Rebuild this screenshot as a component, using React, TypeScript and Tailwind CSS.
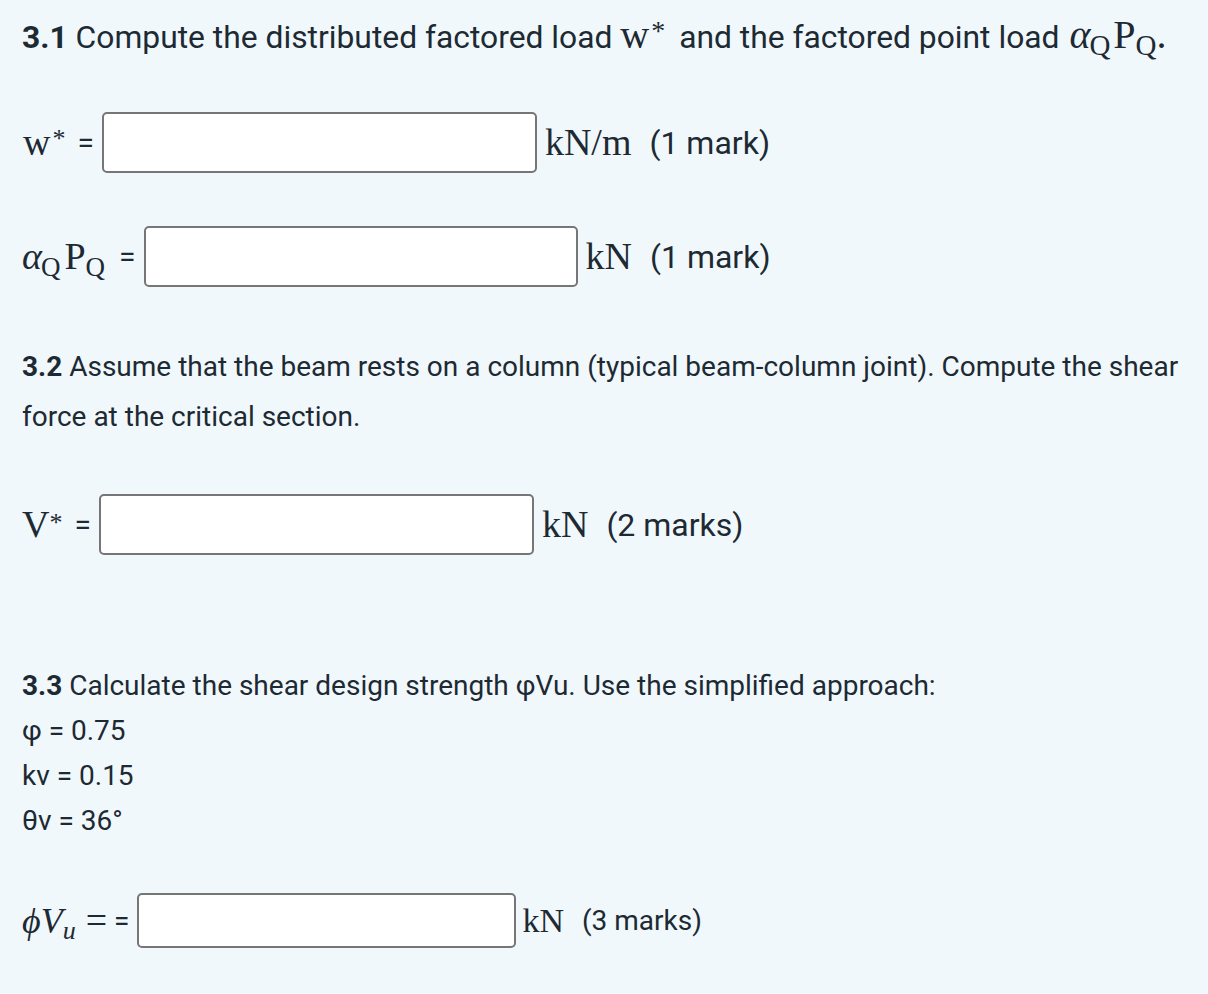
import React from "react";

const serif = "font-['Liberation_Serif',serif]";

const AnswerBox = ({ width, height = 61 }: { width: number; height?: number }) => (
  <input
    type="text"
    className="bg-white border-2 border-[#767676] rounded-[5px] outline-none"
    style={{ width, height }}
  />
);

const Unit = ({
  unit,
  marks,
  small = false,
}: {
  unit: string;
  marks: string;
  small?: boolean;
}) => (
  <div className="flex items-center">
    <span className={`${serif} ${small ? "text-[34px] ml-[6px]" : "text-[38px] ml-[8px]"}`}>{unit}</span>
    <span className={small ? "text-[28px] ml-[18px]" : "text-[32px] ml-[18px]"}>{marks}</span>
  </div>
);

export default function App() {
  return (
    <div className="min-h-screen bg-[#f1f8fc] text-[#1d2a33] font-['Roboto',sans-serif] pl-[22px] pt-[12px] pb-10">
      {/* 3.1 */}
      <p className="text-[31.8px] leading-[46px] whitespace-nowrap">
        <b className="font-bold">3.1</b> Compute the distributed factored load{" "}
        <span className={`${serif} text-[40px] mr-[6px]`}>
          w<sup className="text-[28px] relative -top-[8px] ml-[2px]">*</sup>
        </span>{" "}
        and the factored point load{" "}
        <span className={`${serif} text-[40px] ml-[2px]`}>
          <i>α</i>
          <sub className="text-[29px] -ml-[1px]">Q</sub>
          <span className="ml-[3px]">P</span>
          <sub className="text-[29px]">Q</sub>.
        </span>
      </p>

      <div className="flex items-center mt-[52px] h-[61px]">
        <span className={`${serif} text-[38px] ml-[1px]`}>
          w<sup className="text-[26px] relative -top-[8px] ml-[2px]">*</sup>
        </span>
        <span className="text-[30px] ml-[12px] mr-[8px]">=</span>
        <AnswerBox width={435} />
        <Unit unit="kN/m" marks="(1 mark)" />
      </div>

      <div className="flex items-center mt-[53px] h-[61px]">
        <span className={`${serif} text-[38px]`}>
          <i>α</i>
          <sub className="text-[27px] -ml-[1px]">Q</sub>
          <span className="ml-[4px]">P</span>
          <sub className="text-[27px]">Q</sub>
        </span>
        <span className="text-[30px] ml-[14px] mr-[8px]">=</span>
        <AnswerBox width={434} />
        <Unit unit="kN" marks="(1 mark)" />
      </div>

      {/* 3.2 */}
      <div className="text-[28px] leading-[50px] mt-[55px] pr-[10px]">
        <p>
          <b className="font-bold">3.2</b>
          {" Assume that the beam rests on a column (typical beam-column joint). Compute the shear force at the critical section."}
        </p>
      </div>

      <div className="flex items-center mt-[52px] h-[61px]">
        <span className={`${serif} text-[38px]`}>
          V<sup className="text-[26px] relative -top-[6px]">*</sup>
        </span>
        <span className="text-[30px] ml-[12px] mr-[8px]">=</span>
        <AnswerBox width={435} />
        <Unit unit="kN" marks="(2 marks)" />
      </div>

      {/* 3.3 */}
      <div className="text-[28px] leading-[45px] mt-[108px]">
        <p>
          <b className="font-bold">3.3</b>
          {" Calculate the shear design strength φVu. Use the simplified approach:"}
        </p>
        <p>φ = 0.75</p>
        <p>kv = 0.15</p>
        <p>θv = 36°</p>
      </div>

      <div className="flex items-center mt-[50px] h-[55px]">
        <span className={`${serif} text-[36px] italic`}>
          ϕV<sub className="text-[26px]">u</sub>
        </span>
        <span className={`${serif} text-[38px] ml-[10px]`}>=</span>
        <span className="text-[28px] ml-[7px] mr-[8px]">=</span>
        <AnswerBox width={379} height={55} />
        <Unit unit="kN" marks="(3 marks)" small />
      </div>
    </div>
  );
}
